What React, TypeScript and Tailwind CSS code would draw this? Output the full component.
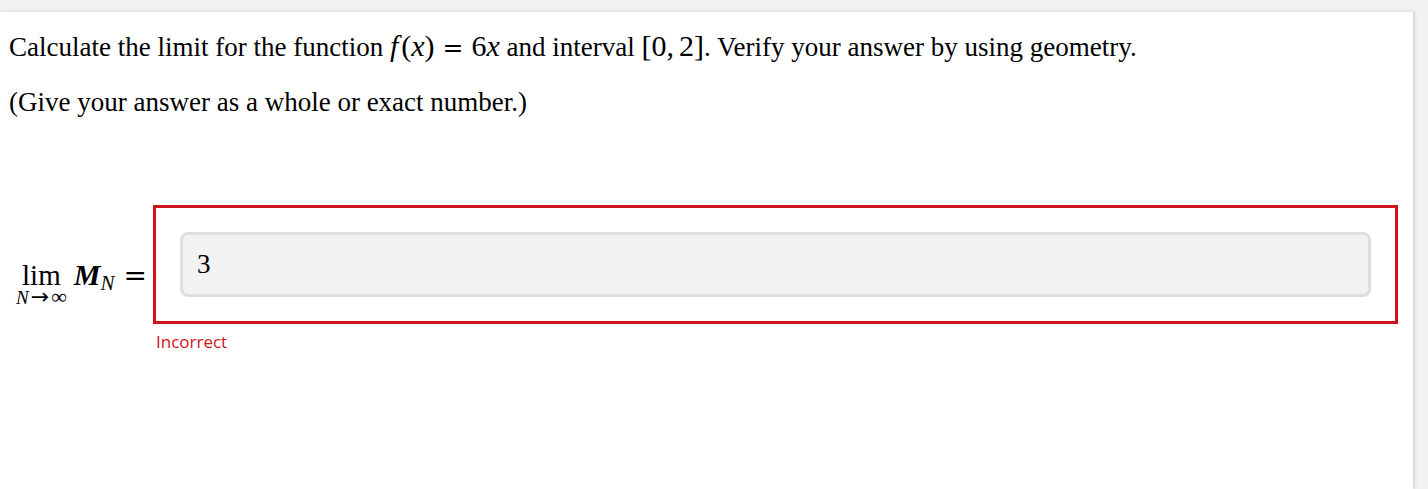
const serif = "font-['Liberation_Serif','Times_New_Roman',serif]"

function Eq({ className = '' }: { className?: string }) {
	// MathJax "=" is wider than the text font's one
	return <span className={`inline-block font-['DejaVu_Serif',serif] ${className}`}>=</span>
}

export default function App() {
	return (
		<div className="min-h-screen bg-[#f2f2f2] pt-[11px] pr-[15px]">
			<div className={`min-h-[478px] bg-white border-t border-[#e8e8e8] shadow-[2px_0_3px_rgba(0,0,0,0.12)] pl-[9px] pr-[15px] pt-[18px] text-black ${serif}`}>
				<p className="text-[27px] leading-[31px]">
					Calculate the limit for the function{' '}
					<span className="whitespace-nowrap text-[30px] leading-[31px]">
						<i>f</i>
						<span className="ml-[3px]">(</span>
						<i>x</i>)<Eq className="mx-[8px] text-[25px]" />6<i>x</i>
					</span>{' '}
					and interval{' '}
					<span className="text-[30px] leading-[31px]">
						[0,<span className="ml-[5px]">2</span>]
					</span>
					. Verify your answer by using geometry.
				</p>
				<p className="mt-[24px] text-[27px] leading-[31px]">(Give your answer as a whole or exact number.)</p>

				<div className="mt-[87px] flex items-start">
					<div className="ml-[7px] mt-[56px] flex items-baseline">
						<div className="flex flex-col items-center">
							<span className="text-[29px] leading-[28px]">lim</span>
							<span className="-mt-[2px] text-[19px] leading-[19px] whitespace-nowrap flex items-baseline">
								<i>N</i>
								<span className="font-['DejaVu_Sans',sans-serif] text-[22px] mx-[2px]">→</span>
								<span className="text-[22px]">∞</span>
							</span>
						</div>
						<span className="ml-[7px] text-[30px] leading-[28px] font-bold italic">M</span>
						<span className="text-[21px] italic relative top-[5px]">N</span>
						<Eq className="ml-[9px] text-[28px] leading-[28px]" />
					</div>
					<div className="ml-[6px] flex-1">
						<div className="border-[3px] border-[#d0121c] p-6">
							<div className="h-[65px] rounded-lg border-[3px] border-[#dedede] bg-[#f2f2f2] flex items-center pl-[14px] text-[27px]">
								3
							</div>
						</div>
						<div className="mt-[8px] pl-[3px] font-['Open_Sans',sans-serif] text-[17px] leading-[20px] text-[#d0121c]">
							Incorrect
						</div>
					</div>
				</div>
			</div>
		</div>
	)
}
